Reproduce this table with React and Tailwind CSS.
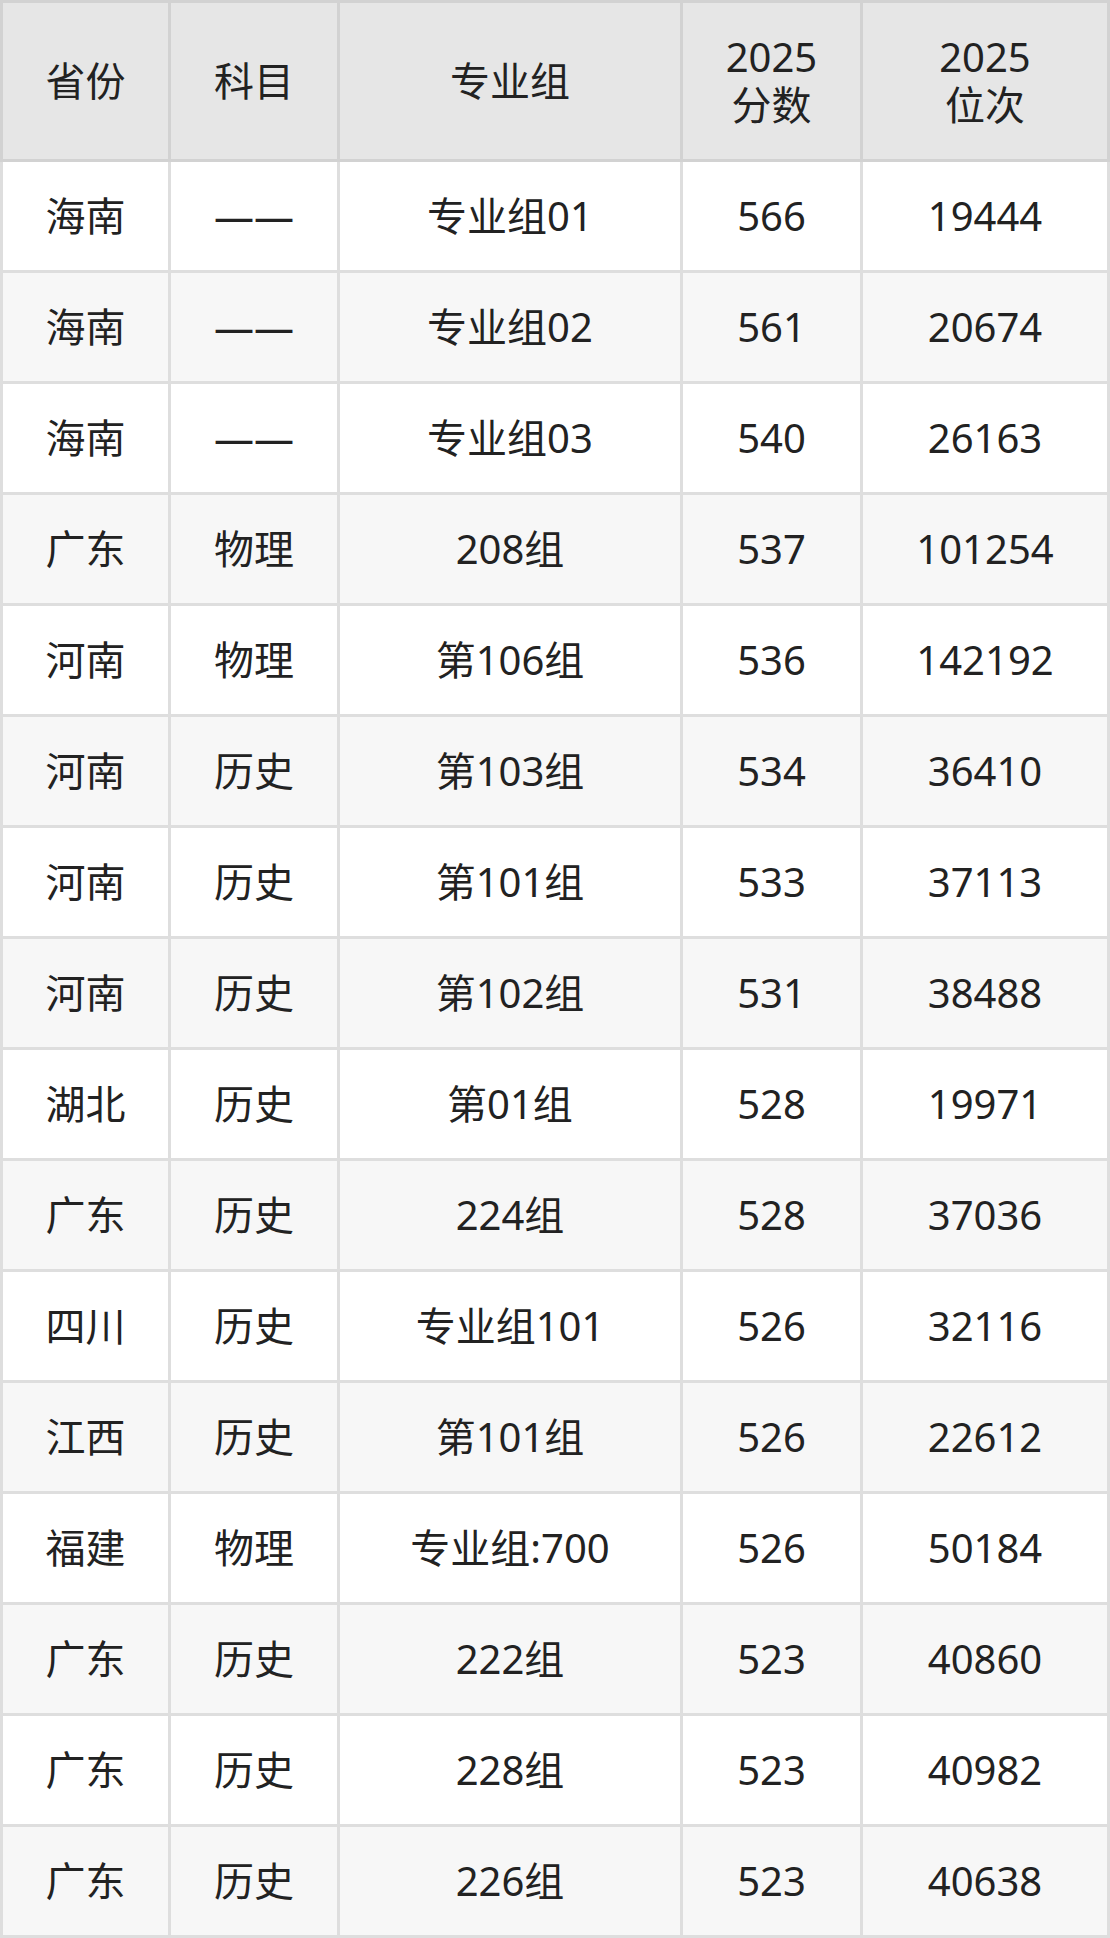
import React from 'react';

const rows = [
  ['海南', '——', '专业组01', '566', '19444'],
  ['海南', '——', '专业组02', '561', '20674'],
  ['海南', '——', '专业组03', '540', '26163'],
  ['广东', '物理', '208组', '537', '101254'],
  ['河南', '物理', '第106组', '536', '142192'],
  ['河南', '历史', '第103组', '534', '36410'],
  ['河南', '历史', '第101组', '533', '37113'],
  ['河南', '历史', '第102组', '531', '38488'],
  ['湖北', '历史', '第01组', '528', '19971'],
  ['广东', '历史', '224组', '528', '37036'],
  ['四川', '历史', '专业组101', '526', '32116'],
  ['江西', '历史', '第101组', '526', '22612'],
  ['福建', '物理', '专业组:700', '526', '50184'],
  ['广东', '历史', '222组', '523', '40860'],
  ['广东', '历史', '228组', '523', '40982'],
  ['广东', '历史', '226组', '523', '40638'],
];

const headers = [['省份'], ['科目'], ['专业组'], ['2025', '分数'], ['2025', '位次']];

export default function App() {
  return (
    <div className="w-[1110px] bg-white text-[#222] font-['Noto_Sans','Noto_Sans_CJK_SC',sans-serif]">
      <table className="w-[1110px] table-fixed border-collapse text-[40px]">
        <colgroup>
          <col className="w-[168px]" />
          <col className="w-[169px]" />
          <col className="w-[343px]" />
          <col className="w-[180px]" />
          <col className="w-[247px]" />
        </colgroup>
        <thead>
          <tr className="h-[159px] bg-[#e6e6e6]">
            {headers.map((h, i) => (
              <th key={i} className="border-[3px] border-[#d2d2d2] font-normal text-center leading-[48px] p-0">
                {h.map((line, j) => (
                  <div key={j}>{line}</div>
                ))}
              </th>
            ))}
          </tr>
        </thead>
        <tbody>
          {rows.map((r, i) => (
            <tr key={i} className={i % 2 === 0 ? 'h-[111px] bg-white' : 'h-[111px] bg-[#f7f7f7]'}>
              {r.map((c, j) => (
                <td key={j} className="border-[3px] border-[#dedede] text-center p-0 leading-none">
                  {c}
                </td>
              ))}
            </tr>
          ))}
        </tbody>
      </table>
    </div>
  );
}
